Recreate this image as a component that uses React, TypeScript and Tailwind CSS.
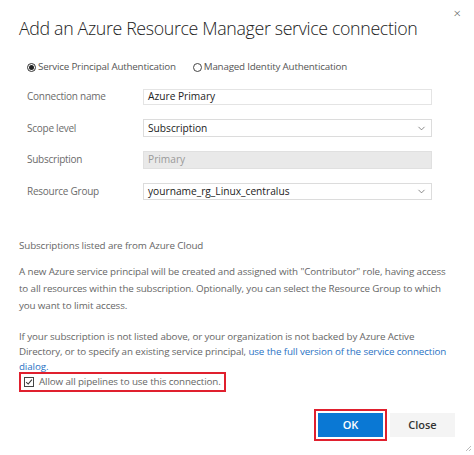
import { ChevronDown } from "lucide-react";

const font = { fontFamily: '"Open Sans", "Noto Sans", sans-serif' };

function Row({ label, children }: { label: string; children: React.ReactNode }) {
  return (
    <div className="flex h-[31.7px] items-center">
      <div className="w-[116px] text-[10px] tracking-[-0.25px] text-[#6b6b6b]">{label}</div>
      <div className="flex-1">{children}</div>
    </div>
  );
}

export default function App() {
  return (
    <div className="relative h-[455px] w-[474px] overflow-hidden bg-white text-[#333]" style={font}>
      <button className="absolute right-[13px] top-[7px] text-[13px] font-light leading-none text-[#555]">×</button>

      <div className="px-[19px] pt-[14px]">
        <h1 className="whitespace-nowrap text-[17.8px] font-light leading-[28px] tracking-[-0.35px] text-[#222]">
          Add an Azure Resource Manager service connection
        </h1>

        <div className="mt-[18px] flex items-center pl-[8px] text-[9.8px] tracking-[-0.2px] text-[#555]">
          <span className="flex h-[9px] w-[9px] items-center justify-center rounded-full border border-[#333]">
            <span className="h-[5px] w-[5px] rounded-full bg-[#222]" />
          </span>
          <span className="ml-[2px]">Service Principal Authentication</span>
          <span className="ml-[17px] h-[9px] w-[9px] rounded-full border border-[#444]" />
          <span className="ml-[2px]">Managed Identity Authentication</span>
        </div>

        <div className="mt-[6px] pl-[8px] pr-[23px]">
          <Row label="Connection name">
            <div className="flex h-[16px] items-center border border-[#e4e4e4] px-[4px] text-[10.2px] text-[#222]">
              Azure Primary
            </div>
          </Row>
          <Row label="Scope level">
            <div className="flex h-[18px] items-center justify-between border border-[#dcdcdc] pl-[4px] pr-[4px] text-[10.2px] text-[#222]">
              Subscription
              <ChevronDown className="h-[11px] w-[11px] text-[#555]" strokeWidth={1.5} />
            </div>
          </Row>
          <Row label="Subscription">
            <div className="flex h-[18px] items-center border border-[#e0e0e0] bg-[#e9e9e9] px-[4px] text-[10.2px] text-[#999]">
              Primary
            </div>
          </Row>
          <Row label="Resource Group">
            <div className="flex h-[17px] items-center justify-between border border-[#dcdcdc] pl-[4px] pr-[4px] text-[10.2px] text-[#222]">
              yourname_rg_Linux_centralus
              <ChevronDown className="h-[11px] w-[11px] text-[#555]" strokeWidth={1.5} />
            </div>
          </Row>
        </div>

        <div className="text-[9.8px] tracking-[-0.12px] text-[#666]">
          <p className="mt-[31px] leading-[16px]">Subscriptions listed are from Azure Cloud</p>

          <p className="mt-[9px] leading-[17px]">
            A new Azure service principal will be created and assigned with "Contributor" role, having access
            <br />
            to all resources within the subscription. Optionally, you can select the Resource Group to which
            <br />
            you want to limit access.
          </p>

          <p className="mt-[15px] leading-[15px]">
            If your subscription is not listed above, or your organization is not backed by Azure Active
            <br />
            Directory, or to specify an existing service principal,{" "}
            <span className="text-[#2a72c4]">
              use the full version of the service connection
              <br />
              dialog.
            </span>
          </p>

          <div className="-mt-[2px] inline-flex h-[20px] items-center border-2 border-[#e0202e] pl-[3px] pr-[3px]">
            <span className="flex h-[10px] w-[10px] items-center justify-center border border-[#444]">
              <svg viewBox="0 0 10 10" className="h-[8px] w-[8px]">
                <path d="M1.5 5.2 L4 7.6 L8.6 2" fill="none" stroke="#333" strokeWidth="1.3" />
              </svg>
            </span>
            <span className="ml-[5px]">Allow all pipelines to use this connection.</span>
          </div>
        </div>

        <div className="mt-[17px] flex justify-end gap-[3px]">
          <div className="border-2 border-[#e0202e] p-[2px]">
            <button className="flex h-[24px] w-[65px] items-center justify-center bg-[#0a78d4] text-[11px] font-semibold text-white">
              OK
            </button>
          </div>
          <button className="mt-[4px] flex h-[24px] w-[65px] items-center justify-center bg-[#f4f4f4] text-[11px] font-semibold text-[#333]">
            Close
          </button>
        </div>
      </div>

      <svg viewBox="0 0 8 8" className="absolute bottom-[3px] right-[2px] h-[8px] w-[8px]">
        <path d="M7 2 L2 7 M7 5 L5 7" stroke="#aaa" strokeWidth="0.8" />
      </svg>
    </div>
  );
}
